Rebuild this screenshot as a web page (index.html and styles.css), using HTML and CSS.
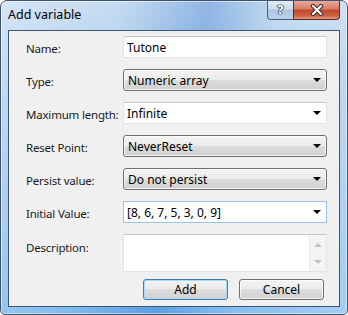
FILE: index.html
```html
<!DOCTYPE html>
<html>
<head>
    <title>Add variable</title>
    <link rel="stylesheet" href="styles.css">
</head>
<body>

<div class="window">
    <div class="titlebar">
        <span class="title">Add variable</span>
        <div class="caption-buttons">
            <span class="cap-help">?</span>
            <span class="cap-close">
                <svg width="14" height="12" viewBox="0 0 14 12">
                    <path d="M3 2 L11 10 M11 2 L3 10" stroke="#3a2a2a" stroke-width="4.2" stroke-linecap="round"/>
                    <path d="M3 2 L11 10 M11 2 L3 10" stroke="#fff" stroke-width="2.2" stroke-linecap="round"/>
                </svg>
            </span>
        </div>
    </div>

    <div class="client">
        <div class="form">
            <label class="label">Name:</label>
            <div class="textbox">Tutone</div>

            <label class="label">Type:</label>
            <div class="dropdown">Numeric array<span class="arrow"></span></div>

            <label class="label">Maximum length:</label>
            <div class="combo">Infinite<span class="arrow"></span></div>

            <label class="label">Reset Point:</label>
            <div class="dropdown">NeverReset<span class="arrow"></span></div>

            <label class="label">Persist value:</label>
            <div class="dropdown">Do not persist<span class="arrow"></span></div>

            <label class="label">Initial Value:</label>
            <div class="combo focused">[8, 6, 7, 5, 3, 0, 9]<span class="arrow"></span></div>

            <label class="label label-top">Description:</label>
            <div class="textarea">
                <div class="scrollbar">
                    <span class="scroll-up"></span>
                    <span class="scroll-down"></span>
                </div>
            </div>
        </div>

        <div class="actions">
            <button class="btn default">Add</button>
            <button class="btn">Cancel</button>
        </div>
    </div>
</div>

</body>
</html>
```

FILE: styles.css
```css
* {
    box-sizing: border-box;
}

body {
    margin: 0;
    background: #fff;
    color: #000;
    font-family: "Noto Sans", "Open Sans", sans-serif;
    font-size: 12px;
}

.window {
    width: 348px;
    height: 315px;
    display: flex;
    flex-direction: column;
    border: 1px solid #3f5470;
    border-radius: 7px 7px 5px 5px;
    background:
        linear-gradient(100deg, rgba(255,255,255,0.35) 0%, rgba(255,255,255,0.1) 30%, rgba(30,100,200,0.28) 52%, rgba(255,255,255,0.12) 70%, rgba(255,255,255,0.35) 100%),
        linear-gradient(#bed7ef, #a5c8ec 30%, #74b3ec 100%);
    box-shadow: inset 0 0 0 1px rgba(255,255,255,0.5);
}

.titlebar {
    height: 29px;
    display: flex;
    justify-content: space-between;
    align-items: flex-start;
    padding: 0 7px;
}

.title {
    padding-top: 6px;
    line-height: 16px;
    font-size: 12.5px;
}

.caption-buttons {
    display: flex;
}

.cap-help,
.cap-close {
    height: 19px;
    display: flex;
    align-items: center;
    justify-content: center;
    border: 1px solid #4a5c75;
    border-top: none;
}

.cap-help {
    width: 26px;
    border-right: none;
    border-bottom-left-radius: 4px;
    background: linear-gradient(#e4edf7, #cbdbee 45%, #adc5e2 50%, #bcd3ec);
    color: #fff;
    font-family: "DejaVu Sans", sans-serif;
    font-weight: bold;
    font-size: 12px;
    line-height: 1;
    text-shadow: 0 0 1px #1f2f48, 0 0 1px #1f2f48, 0 0 1px #1f2f48, 0 0 1px #1f2f48, 0 0 1px #1f2f48;
}

.cap-close {
    width: 47px;
    border-color: #5a2b27;
    border-bottom-right-radius: 4px;
    background: linear-gradient(#eaa99a, #d47c66 45%, #c2472d 50%, #cd5e42 80%, #e39a7e);
}

.client {
    flex: 1;
    margin: 0 7px 7px;
    border: 1px solid #3b5672;
    background: #f0f0f0;
    padding: 5px 12px 0 17px;
    display: flex;
    flex-direction: column;
}

.form {
    display: grid;
    grid-template-columns: 97px 1fr;
    row-gap: 11px;
}

.label {
    align-self: center;
    padding-top: 4px;
    line-height: 16px;
    font-size: 11.5px;
    letter-spacing: -0.2px;
    white-space: nowrap;
    color: #1a1a1a;
}

.label-top {
    align-self: start;
    padding-top: 6px;
}

.textbox,
.combo,
.dropdown {
    height: 22px;
    display: flex;
    align-items: center;
    padding: 0 3px;
    white-space: nowrap;
}

.textbox,
.combo,
.textarea {
    background: #fff;
    border: 1px solid #e2e3ea;
    border-top-color: #c5c7cd;
}

.combo.focused {
    border-color: #9cc3ea;
}

.dropdown {
    padding-left: 4px;
    border: 1px solid #707070;
    border-radius: 3px;
    background: linear-gradient(#f3f3f3, #ebebeb 50%, #dddddd 50%, #d0d0d0);
    box-shadow: inset 0 0 0 1px rgba(255,255,255,0.7);
}

.arrow {
    margin-left: auto;
    margin-right: 2px;
    width: 0;
    height: 0;
    border-left: 4px solid transparent;
    border-right: 4px solid transparent;
    border-top: 4px solid #000;
}

.textarea {
    height: 38px;
    display: flex;
    justify-content: flex-end;
}

.scrollbar {
    width: 17px;
    background: #f4f4f4;
    border-left: 1px solid #ececec;
    display: flex;
    flex-direction: column;
    justify-content: space-between;
    align-items: center;
    padding: 8px 0 7px;
}

.scroll-up,
.scroll-down {
    width: 0;
    height: 0;
    border-left: 4px solid transparent;
    border-right: 4px solid transparent;
}

.scroll-up {
    border-bottom: 4px solid #c2c2c2;
}

.scroll-down {
    border-top: 4px solid #c2c2c2;
}

.actions {
    display: flex;
    justify-content: flex-end;
    gap: 11px;
    margin-top: 7px;
    margin-right: 3px;
}

.btn {
    width: 85px;
    height: 21px;
    padding: 0;
    border: 1px solid #707070;
    border-radius: 3px;
    background: linear-gradient(#f3f3f3, #ebebeb 50%, #dddddd 50%, #d0d0d0);
    box-shadow: inset 0 0 0 1px rgba(255,255,255,0.7);
    font-family: "Noto Sans", "Open Sans", sans-serif;
    font-size: 12px;
    color: #000;
}

.btn.default {
    border-color: #3c7fb1;
    box-shadow: inset 0 0 0 1px #a8dcf8;
}
```
